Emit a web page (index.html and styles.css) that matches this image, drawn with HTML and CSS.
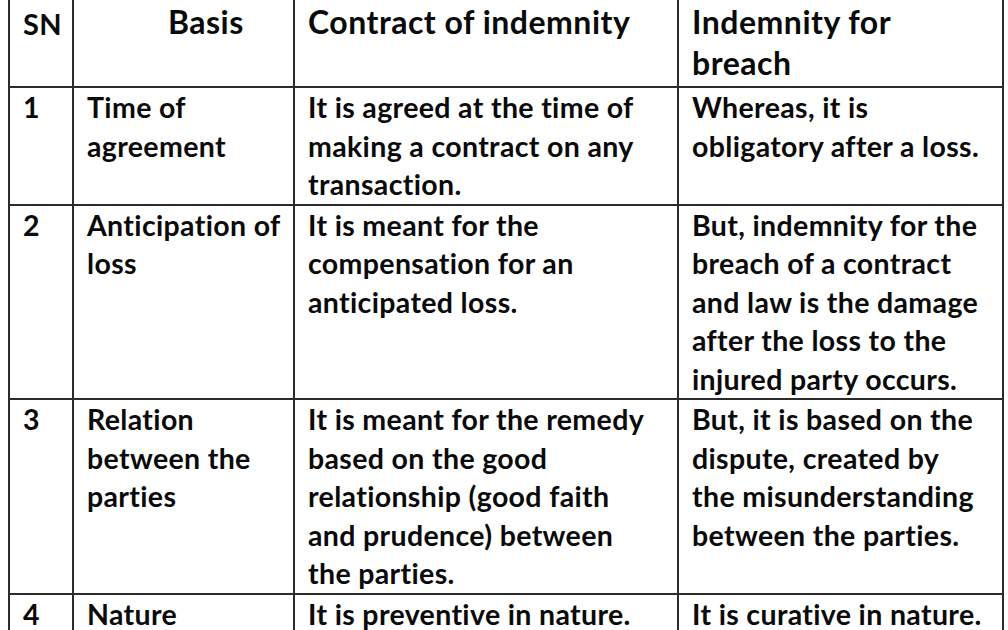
FILE: index.html
```html
<!DOCTYPE html>
<html>
<head>
<meta charset="utf-8">
<link rel="stylesheet" href="styles.css">
</head>
<body>
<table class="cmp">
  <colgroup>
    <col class="c-sn"><col class="c-basis"><col class="c-a"><col class="c-b">
  </colgroup>
  <thead>
    <tr class="head">
      <th class="sn">SN</th>
      <th class="basis-h">Basis</th>
      <th>Contract of indemnity</th>
      <th>Indemnity for<br>breach</th>
    </tr>
  </thead>
  <tbody>
    <tr>
      <td class="sn">1</td>
      <td>Time of<br>agreement</td>
      <td>It is agreed at the time of<br>making a contract on any<br>transaction.</td>
      <td>Whereas, it is<br>obligatory after a loss.</td>
    </tr>
    <tr>
      <td class="sn">2</td>
      <td>Anticipation of<br>loss</td>
      <td>It is meant for the<br>compensation for an<br>anticipated loss.</td>
      <td>But, indemnity for the<br>breach of a contract<br>and law is the damage<br>after the loss to the<br>injured party occurs.</td>
    </tr>
    <tr>
      <td class="sn">3</td>
      <td>Relation<br>between the<br>parties</td>
      <td>It is meant for the remedy<br>based on the good<br>relationship (good faith<br>and prudence) between<br>the parties.</td>
      <td>But, it is based on the<br>dispute, created by<br>the misunderstanding<br>between the parties.</td>
    </tr>
    <tr>
      <td class="sn">4</td>
      <td>Nature</td>
      <td>It is preventive in nature.</td>
      <td>It is curative in nature.</td>
    </tr>
  </tbody>
</table>
</body>
</html>
```

FILE: styles.css
```css
html, body {
  margin: 0;
  padding: 0;
  background: #ffffff;
  overflow: hidden;
}

body {
  font-family: "Lato", "Liberation Sans", sans-serif;
  font-weight: 700;
  color: #0a0a0a;
}

.cmp {
  margin-left: 8px;
  border-collapse: collapse;
  table-layout: fixed;
  width: 994px;
}

.c-sn { width: 64px; }
.c-basis { width: 221px; }
.c-a { width: 384px; }
.c-b { width: 325px; }

.cmp th,
.cmp td {
  border: 2px solid #2b2b2b;
  padding: 0 8px 0 13px;
  vertical-align: top;
  text-align: left;
  white-space: nowrap;
  font-size: 28.5px;
  font-weight: 700;
  letter-spacing: 0.35px;
  line-height: 38.5px;
}

.cmp th {
  border-top: none;
  font-size: 32px;
  letter-spacing: 0.5px;
  line-height: 41px;
  padding-top: 1px;
  height: 87px;
  box-sizing: border-box;
}

.cmp th.sn {
  font-size: 29px;
  letter-spacing: 0.35px;
  padding-top: 3px;
}

.cmp .sn {
  padding-left: 13px;
}

.cmp .basis-h {
  padding-left: 94px;
}
```
